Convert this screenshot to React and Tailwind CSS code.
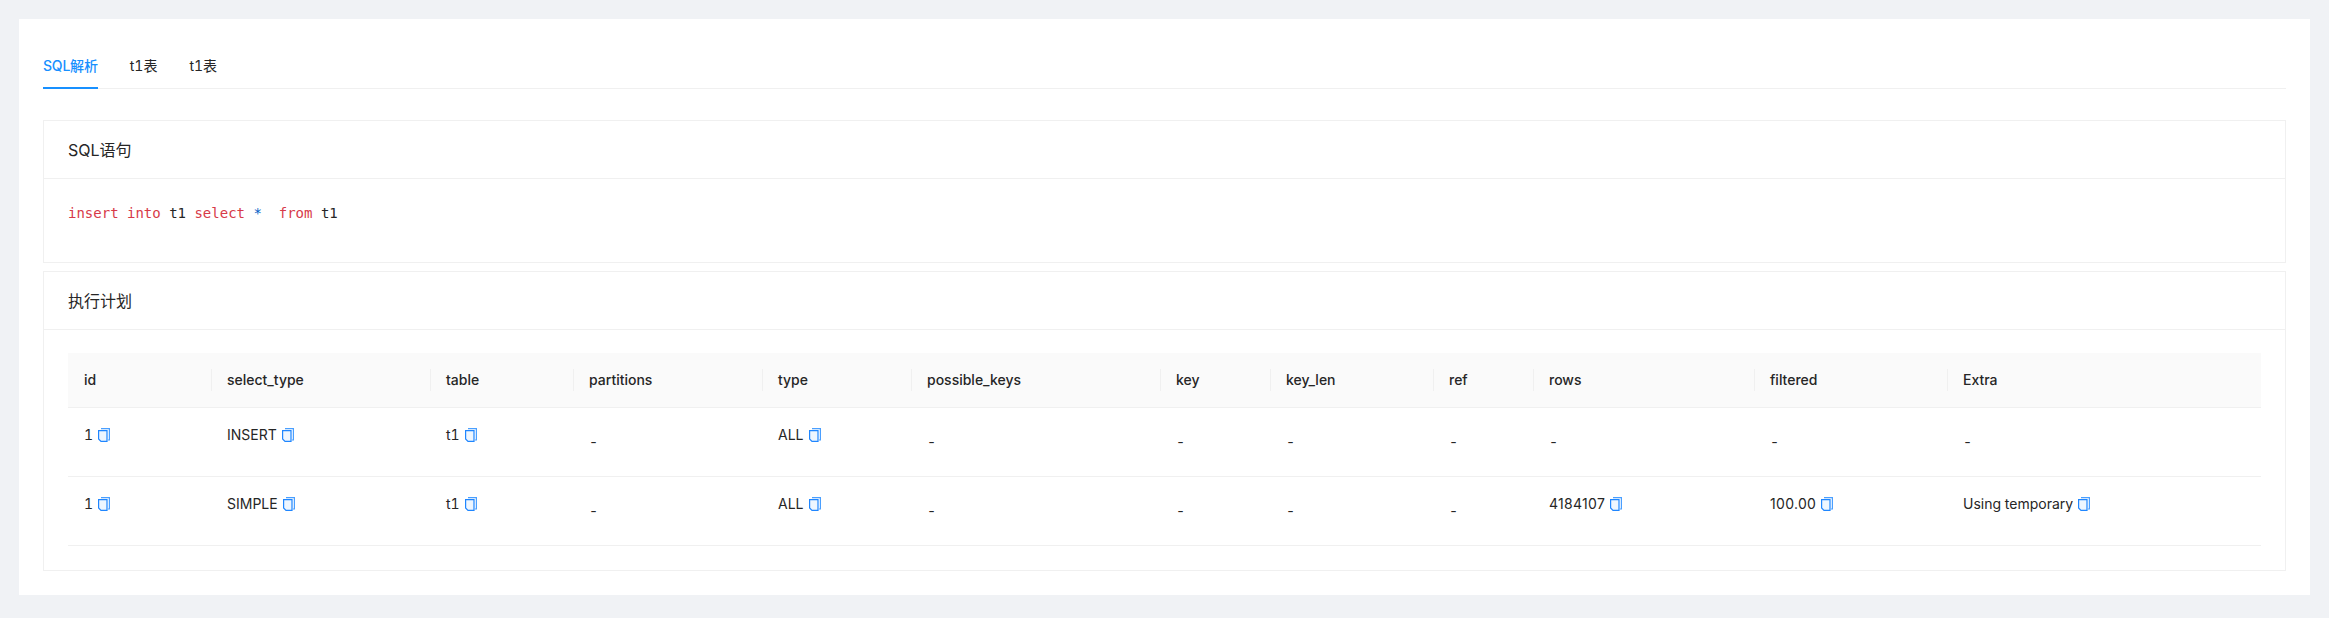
import React from "react";

const columns = [
  { title: "id", width: "w-[143px]" },
  { title: "select_type", width: "w-[219px]" },
  { title: "table", width: "w-[143px]" },
  { title: "partitions", width: "w-[189px]" },
  { title: "type", width: "w-[149px]" },
  { title: "possible_keys", width: "w-[249px]" },
  { title: "key", width: "w-[110px]" },
  { title: "key_len", width: "w-[163px]" },
  { title: "ref", width: "w-[100px]" },
  { title: "rows", width: "w-[221px]" },
  { title: "filtered", width: "w-[193px]" },
  { title: "Extra", width: "" },
];

const rows = [
  ["1", "INSERT", "t1", null, "ALL", null, null, null, null, null, null, null],
  ["1", "SIMPLE", "t1", null, "ALL", null, null, null, null, "4184107", "100.00", "Using temporary"],
];

const CopyIcon = () => (
  <svg width="12" height="14" viewBox="0 0 12 14" fill="none" className="inline-block ml-[5px] align-[-2px]">
    <path d="M3 .6h8.400v11.400h-1.500" stroke="#4a9fff" strokeWidth="1.200" />
    <path d="M.6 2.600h8.400v10.800h-6l-2.400-2.400z" stroke="#1f86ff" strokeWidth="1.200" fill="#eef6ff" />
  </svg>
);

const Card = ({ title, children, className }) => (
  <div className={`border border-[#f0f0f0] ${className}`}>
    <div className="h-[58px] px-6 flex items-center border-b border-[#f0f0f0] text-base text-[#262626]">
      {title}
    </div>
    {children}
  </div>
);

export default function App() {
  return (
    <div
      className="h-[618px] bg-[#f0f2f5] p-[19px] text-sm text-[#262626] tabular-nums overflow-hidden"
      style={{ fontFamily: 'Inter, "Noto Sans CJK SC", sans-serif' }}
    >
      <div className="bg-white h-[576px] p-6">
        <div className="flex gap-8 border-b border-[#f0f0f0] mb-[31px] h-[46px]">
          <div className="h-[46px] py-3 leading-[22px] text-[#1890ff] font-medium tracking-[-0.2px] border-b-2 border-[#1890ff]">SQL解析</div>
          <div className="py-3 leading-[22px]">t1表</div>
          <div className="py-3 leading-[22px]">t1表</div>
        </div>

        <Card title="SQL语句" className="h-[143px] mb-2">
          <div className="px-6 pt-[23px] leading-[22px] whitespace-pre" style={{ fontFamily: '"DejaVu Sans Mono", monospace' }}>
            <span className="text-[#d73a49]">insert into</span> t1 <span className="text-[#d73a49]">select</span>{" "}
            <span className="text-[#005cc5]">*</span>{"  "}
            <span className="text-[#d73a49]">from</span> t1
          </div>
        </Card>

        <Card title="执行计划" className="h-[300px]">
          <div className="px-6 pt-[23px]">
            <table className="w-full table-fixed border-collapse">
              <thead>
                <tr className="bg-[#fafafa]">
                  {columns.map((col, i) => (
                    <th
                      key={i}
                      className={`${col.width} relative h-[54px] px-4 text-left font-[450] border-b border-[#f0f0f0] ${
                        i > 0 ? "before:absolute before:left-0 before:top-[16px] before:h-[22px] before:w-px before:bg-[#f0f0f0]" : ""
                      }`}
                    >
                      {col.title}
                    </th>
                  ))}
                </tr>
              </thead>
              <tbody>
                {rows.map((row, r) => (
                  <tr key={r}>
                    {row.map((cell, i) => (
                      <td key={i} className="h-[69px] px-4 py-4 border-b border-[#f0f0f0] align-middle leading-[22px]">
                        {cell === null ? (
                          "-"
                        ) : (
                          <div className={i === 9 || i === 10 ? "mb-[14px] [font-variant-numeric:normal] tracking-[0.3px]" : "mb-[14px]"}>
                            {cell}
                            <CopyIcon />
                          </div>
                        )}
                      </td>
                    ))}
                  </tr>
                ))}
              </tbody>
            </table>
          </div>
        </Card>
      </div>
    </div>
  );
}
